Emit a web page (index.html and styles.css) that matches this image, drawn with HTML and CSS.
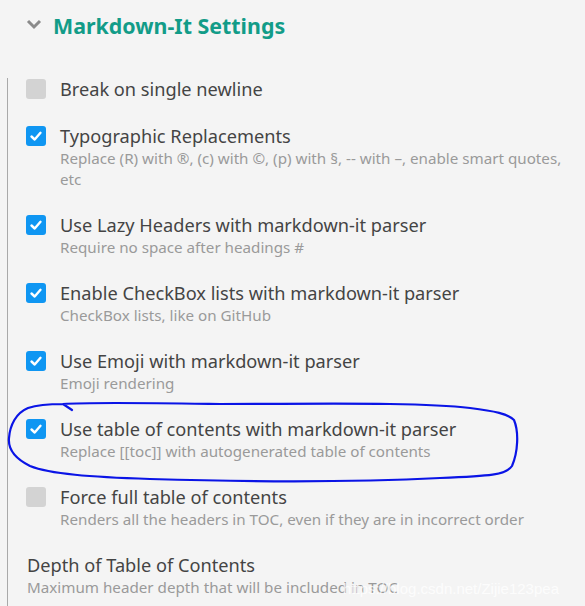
FILE: index.html
```html
<!DOCTYPE html>
<html>
<head>
<meta charset="utf-8">
<link rel="stylesheet" href="styles.css">
</head>
<body>
<div class="page">
  <div class="header">
    <svg class="chevron" width="16" height="12" viewBox="0 0 16 12"><path d="M2 3 L8 9 L14 3" fill="none" stroke="#8a8a8a" stroke-width="3"/></svg>
    <h1 class="title">Markdown-It Settings</h1>
  </div>
  <div class="section">
    <div class="item">
      <span class="cb"></span>
      <div class="text"><div class="label">Break on single newline</div></div>
    </div>
    <div class="item">
      <span class="cb on"><svg viewBox="0 0 20 20" width="20" height="20"><path d="M5.5 10.5 L8.7 13.5 L14.5 6.8" fill="none" stroke="#fff" stroke-width="2.4" stroke-linecap="round" stroke-linejoin="round"/></svg></span>
      <div class="text"><div class="label">Typographic Replacements</div><div class="desc">Replace (R) with ®, (c) with ©, (p) with §, -- with –, enable smart quotes, etc</div></div>
    </div>
    <div class="item">
      <span class="cb on"><svg viewBox="0 0 20 20" width="20" height="20"><path d="M5.5 10.5 L8.7 13.5 L14.5 6.8" fill="none" stroke="#fff" stroke-width="2.4" stroke-linecap="round" stroke-linejoin="round"/></svg></span>
      <div class="text"><div class="label">Use Lazy Headers with markdown-it parser</div><div class="desc">Require no space after headings #</div></div>
    </div>
    <div class="item">
      <span class="cb on"><svg viewBox="0 0 20 20" width="20" height="20"><path d="M5.5 10.5 L8.7 13.5 L14.5 6.8" fill="none" stroke="#fff" stroke-width="2.4" stroke-linecap="round" stroke-linejoin="round"/></svg></span>
      <div class="text"><div class="label">Enable CheckBox lists with markdown-it parser</div><div class="desc">CheckBox lists, like on GitHub</div></div>
    </div>
    <div class="item">
      <span class="cb on"><svg viewBox="0 0 20 20" width="20" height="20"><path d="M5.5 10.5 L8.7 13.5 L14.5 6.8" fill="none" stroke="#fff" stroke-width="2.4" stroke-linecap="round" stroke-linejoin="round"/></svg></span>
      <div class="text"><div class="label">Use Emoji with markdown-it parser</div><div class="desc">Emoji rendering</div></div>
    </div>
    <div class="item">
      <span class="cb on"><svg viewBox="0 0 20 20" width="20" height="20"><path d="M5.5 10.5 L8.7 13.5 L14.5 6.8" fill="none" stroke="#fff" stroke-width="2.4" stroke-linecap="round" stroke-linejoin="round"/></svg></span>
      <div class="text"><div class="label">Use table of contents with markdown-it parser</div><div class="desc">Replace [[toc]] with autogenerated table of contents</div></div>
    </div>
    <div class="item">
      <span class="cb"></span>
      <div class="text"><div class="label">Force full table of contents</div><div class="desc">Renders all the headers in TOC, even if they are in incorrect order</div></div>
    </div>
    <div class="item plain">
      <div class="text"><div class="label">Depth of Table of Contents</div><div class="desc">Maximum header depth that will be included in TOC</div></div>
    </div>
  </div>
  <svg class="scribble" width="585" height="606" viewBox="0 0 585 606">
    <path d="M72 410 L63 404 C90 402 150 403 220 404 C320 404 420 402 470 408 C495 411 508 414 514 420 C519 432 518 452 512 466 C506 475 490 476 440 478 C360 482 250 482 150 479 C90 477 50 474 30 466 C14 458 8 448 9 438 C10 425 16 413 28 408 C40 404 55 404 63 404" fill="none" stroke="#0a14e6" stroke-width="2.2" stroke-linecap="round" stroke-linejoin="round"/>
  </svg>
  <div class="watermark">https://blog.csdn.net/Zijie123pea</div>
</div>
</body>
</html>
```

FILE: styles.css
```css
html, body {
  margin: 0;
  padding: 0;
  background: #f4f4f4;
}
.page {
  position: relative;
  width: 585px;
  height: 606px;
  overflow: hidden;
  font-family: "Noto Sans", "Open Sans", sans-serif;
}
.header {
  display: flex;
  align-items: center;
  height: 50px;
  padding-left: 26px;
  gap: 11px;
}
.chevron {
  display: block;
  margin-top: -2px;
}
.title {
  margin: 0;
  font-size: 21.4px;
  font-weight: 700;
  color: #129c88;
  letter-spacing: 0;
}
.section {
  margin-left: 7px;
  margin-top: 28px;
  border-left: 1px solid #a9a9a9;
  padding-left: 18px;
  display: flex;
  flex-direction: column;
  gap: 23.5px;
  padding-bottom: 40px;
}
.item {
  display: flex;
  align-items: flex-start;
  gap: 14px;
}
.item.plain {
  padding-left: 1px;
}
.cb {
  flex: none;
  width: 20px;
  height: 20px;
  margin-top: 1px;
  border-radius: 3px;
  background: #d3d3d3;
  display: block;
}
.cb.on {
  background: #0f96f2;
}
.cb svg {
  display: block;
}
.text {
  flex: 1;
  padding-right: 20px;
}
.label {
  font-size: 18.2px;
  line-height: 23px;
  color: #444;
}
.desc {
  font-size: 15.2px;
  line-height: 21.5px;
  color: #9a9a9a;
}
.scribble {
  position: absolute;
  left: 0;
  top: 0;
  pointer-events: none;
}
.watermark {
  position: absolute;
  left: 343px;
  top: 580px;
  font-family: "Liberation Sans", Arial, sans-serif;
  font-size: 15px;
  color: rgba(255, 255, 255, 0.8);
  white-space: nowrap;
}
```
